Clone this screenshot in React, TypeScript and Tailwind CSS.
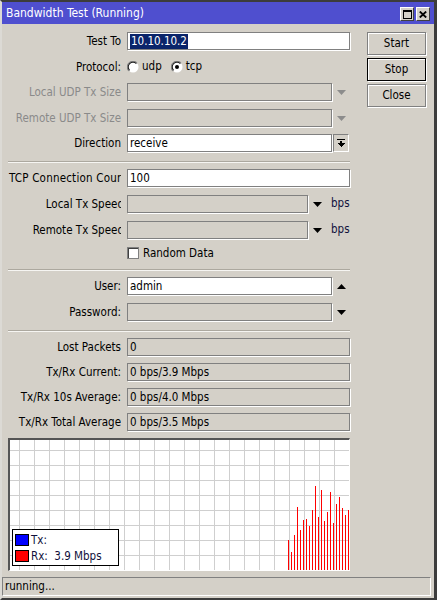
import React from "react";

const F = "font-['DejaVu_Sans_Condensed','DejaVu_Sans',sans-serif]";

function Label({
  text,
  disabled,
  clip,
  left,
}: {
  text: string;
  disabled?: boolean;
  clip?: boolean;
  left?: boolean;
}) {
  return (
    <div
      className={`w-[113px] shrink-0 overflow-hidden whitespace-nowrap flex ${
        left ? "justify-start pl-[1px] tracking-[0.2px]" : "justify-end"
      } text-[11.5px] leading-[18px] ${disabled ? "text-[#8a8a8a]" : "text-black"}`}
    >
      <span className={clip ? "mr-[-3px] shrink-0" : "shrink-0"}>{text}</span>
    </div>
  );
}

function Box({
  className,
  white,
  children,
}: {
  className: string;
  white?: boolean;
  children?: React.ReactNode;
}) {
  return (
    <div
      className={`h-[18px] shrink-0 ml-[6px] border border-[#808080] shadow-[1px_1px_0_#ffffff] ${
        white ? "bg-white" : "bg-[#d4d0c8]"
      } pl-[2px] text-[11.5px] leading-[16px] text-black whitespace-nowrap overflow-hidden ${className}`}
    >
      {children}
    </div>
  );
}

function Down({ gray }: { gray?: boolean }) {
  return (
    <svg width="9" height="5" viewBox="0 0 9 5" className="shrink-0">
      <polygon points="0,0 9,0 4.5,5" fill={gray ? "#8c8c8c" : "#000000"} />
    </svg>
  );
}

function Up() {
  return (
    <svg width="9" height="5" viewBox="0 0 9 5" className="shrink-0">
      <polygon points="0,5 9,5 4.5,0" fill="#000000" />
    </svg>
  );
}

function Sep({ mt }: { mt: string }) {
  return (
    <div
      className={`${mt} w-[342px] h-[2px] border-t border-t-[#aca89f] border-b border-b-[#f6f5f2]`}
    />
  );
}

function Radio({ checked }: { checked?: boolean }) {
  return (
    <svg width="12" height="12" viewBox="0 0 12 12" className="shrink-0">
      <circle cx="6" cy="6" r="5.5" fill="#ffffff" />
      <path d="M1.8 10.2 A5.5 5.5 0 0 1 10.2 1.8" fill="none" stroke="#808080" strokeWidth="1" />
      <path d="M2.6 9.4 A4.6 4.6 0 0 1 9.4 2.6" fill="none" stroke="#202020" strokeWidth="1.2" />
      {checked && <circle cx="6" cy="6" r="2" fill="#000000" />}
    </svg>
  );
}

const bars = [539, 551, 534, 506, 529, 519, 518, 525, 509, 485, 516, 489, 520, 511, 491, 522, 503, 496, 507, 514, 509];

function Chart() {
  const vx: number[] = [];
  for (let k = 0; k <= 21; k++) vx.push(9.5 + 15 * k);
  const hy: number[] = [];
  for (let k = 0; k <= 7; k++) hy.push(10.5 + 15 * k);
  return (
    <div className="mt-[7px] w-[342px] h-[133px] border-t-2 border-l-2 border-t-[#555555] border-l-[#555555] border-r border-b border-r-white border-b-white bg-white relative">
      <svg width="339" height="130" viewBox="0 0 339 130" className="block" shapeRendering="crispEdges">
        {vx.map((x) => (
          <line key={"v" + x} x1={x} y1={0} x2={x} y2={130} stroke="#cfcfcf" strokeWidth="1" />
        ))}
        {hy.map((y) => (
          <line key={"h" + y} x1={0} y1={y} x2={339} y2={y} stroke="#cfcfcf" strokeWidth="1" />
        ))}
        {bars.map((t, i) => (
          <rect key={i} x={278 + 3 * i} y={t - 439} width="1" height={569 - t} fill="#ff0000" />
        ))}
      </svg>
      <div className="absolute left-[2px] top-[89px] w-[107px] h-[37px] border border-black bg-white pl-[2px] pt-[4px] flex flex-col gap-[4px] text-[11.5px] leading-[12px] text-[#10103c]">
        <div className="flex items-center h-[12px]">
          <div className="w-[14px] h-[12px] bg-[#0000ff] border border-black" />
          <span className="ml-[2px]">Tx:</span>
        </div>
        <div className="flex items-center h-[12px]">
          <div className="w-[14px] h-[12px] bg-[#ff0000] border border-black" />
          <span className="ml-[2px] whitespace-pre">Rx:  3.9 Mbps</span>
        </div>
      </div>
    </div>
  );
}

function Btn({ text, def, mt }: { text: string; def?: boolean; mt?: string }) {
  return (
    <div
      className={`${mt ?? ""} w-[59px] h-[23px] flex items-center justify-center text-[11.5px] text-black ${
        def
          ? "border border-black shadow-[inset_1px_1px_0_#ffffff,1px_1px_0_#ffffff]"
          : "border border-[#808080] shadow-[inset_1px_1px_0_#ffffff,1px_1px_0_#ffffff]"
      }`}
    >
      {text}
    </div>
  );
}

export default function App() {
  return (
    <div
      className={`${F} w-[437px] h-[600px] flex flex-col bg-[#d4d0c8] border-t-2 border-t-[#3c3c3c] border-l-2 border-l-[#dcdad5] border-r-[3px] border-r-[#3c3c3c] border-b-2 border-b-[#3c3c3c] overflow-hidden`}
    >
      {/* title bar */}
      <div className="h-[22px] shrink-0 bg-[#4f4fcf] flex items-start pl-[4px] pr-[4px]">
        <div className="text-white text-[12px] leading-[22px] flex-1">Bandwidth Test (Running)</div>
        <div className="flex gap-[2px] mt-[5px]">
          <div className="w-[14px] h-[14px] bg-[#d4d0c8] border border-t-white border-l-white border-r-[#404040] border-b-[#404040] flex items-center justify-center">
            <svg width="9" height="9" viewBox="0 0 9 9" shapeRendering="crispEdges">
              <rect x="0.5" y="0.5" width="8" height="8" fill="none" stroke="#000" strokeWidth="1" />
              <rect x="0" y="0" width="9" height="2" fill="#000" />
            </svg>
          </div>
          <div className="w-[14px] h-[14px] bg-[#d4d0c8] border border-t-white border-l-white border-r-[#404040] border-b-[#404040] flex items-center justify-center">
            <svg width="8" height="7" viewBox="0 0 8 7">
              <path d="M0.8 0.5 L7.2 6.5 M7.2 0.5 L0.8 6.5" stroke="#000" strokeWidth="1.8" />
            </svg>
          </div>
        </div>
      </div>

      {/* body */}
      <div className="flex-1 flex pl-[6px] pt-[8px]">
        <div className="w-[343px] shrink-0 flex flex-col">
          <div className="flex items-center h-[18px]">
            <Label text="Test To" />
            <Box white className="w-[223px] pl-[2px]">
              <span className="bg-[#0a246a] text-white px-[1px] leading-[15px] inline-block">10.10.10.2</span>
            </Box>
          </div>
          <div className="flex items-center h-[18px] mt-[8px]">
            <Label text="Protocol:" />
            <div className="ml-[6px] flex items-center text-[11.5px]">
              <Radio />
              <span className="ml-[3px]">udp</span>
              <span className="ml-[9px]">
                <Radio checked />
              </span>
              <span className="ml-[3px]">tcp</span>
            </div>
          </div>
          <div className="flex items-center h-[18px] mt-[7px]">
            <Label text="Local UDP Tx Size" disabled />
            <Box className="w-[205px]" />
            <div className="ml-[5px]">
              <Down gray />
            </div>
          </div>
          <div className="flex items-center h-[18px] mt-[8px]">
            <Label text="Remote UDP Tx Size" disabled />
            <Box className="w-[205px]" />
            <div className="ml-[5px]">
              <Down gray />
            </div>
          </div>
          <div className="flex items-center h-[18px] mt-[7px]">
            <Label text="Direction" />
            <Box white className="w-[205px]">receive</Box>
            <div className="ml-[1px] w-[16px] h-[18px] border border-t-[#808080] border-l-[#808080] border-r-white border-b-white flex items-center justify-center">
              <svg width="8" height="9" viewBox="0 0 8 9" shapeRendering="crispEdges">
                <rect x="0" y="0" width="8" height="1" fill="#000" />
                <rect x="3" y="2" width="2" height="3" fill="#000" />
                <polygon points="0,4 8,4 4,8" fill="#000" />
              </svg>
            </div>
          </div>

          <Sep mt="mt-[9px]" />

          <div className="flex items-center h-[18px] mt-[6px]">
            <Label text="TCP Connection Count" left />
            <Box white className="w-[223px]">100</Box>
          </div>
          <div className="flex items-center h-[18px] mt-[8px]">
            <Label text="Local Tx Speed" clip />
            <Box className="w-[181px]" />
            <div className="ml-[5px]">
              <Down />
            </div>
            <span className="ml-[9px] text-[11.5px] text-[#10103c]">bps</span>
          </div>
          <div className="flex items-center h-[18px] mt-[8px]">
            <Label text="Remote Tx Speed" clip />
            <Box className="w-[181px]" />
            <div className="ml-[5px]">
              <Down />
            </div>
            <span className="ml-[9px] text-[11.5px] text-[#10103c]">bps</span>
          </div>
          <div className="flex items-center h-[12px] mt-[8px]">
            <div className="w-[113px] shrink-0" />
            <div className="ml-[6px] w-[12px] h-[12px] bg-white border border-[#808080] shadow-[inset_1px_1px_0_#404040]" />
            <span className="ml-[4px] text-[11.5px] leading-[12px]">Random Data</span>
          </div>

          <Sep mt="mt-[10px]" />

          <div className="flex items-center h-[18px] mt-[6px]">
            <Label text="User:" />
            <Box white className="w-[205px]">admin</Box>
            <div className="ml-[5px]">
              <Up />
            </div>
          </div>
          <div className="flex items-center h-[18px] mt-[8px]">
            <Label text="Password:" />
            <Box className="w-[205px]" />
            <div className="ml-[5px]">
              <Down />
            </div>
          </div>

          <Sep mt="mt-[9px]" />

          <div className="flex items-center h-[18px] mt-[6px]">
            <Label text="Lost Packets" />
            <Box className="w-[223px]">0</Box>
          </div>
          <div className="flex items-center h-[18px] mt-[7px]">
            <Label text="Tx/Rx Current:" />
            <Box className="w-[223px]">0 bps/3.9 Mbps</Box>
          </div>
          <div className="flex items-center h-[18px] mt-[7px]">
            <Label text="Tx/Rx 10s Average:" />
            <Box className="w-[223px]">0 bps/4.0 Mbps</Box>
          </div>
          <div className="flex items-center h-[18px] mt-[7px]">
            <Label text="Tx/Rx Total Average" />
            <Box className="w-[223px]">0 bps/3.5 Mbps</Box>
          </div>

          <Chart />
        </div>

        <div className="ml-[16px] flex flex-col">
          <Btn text="Start" />
          <Btn text="Stop" def mt="mt-[3px]" />
          <Btn text="Close" mt="mt-[3px]" />
        </div>
      </div>

      {/* status bar */}
      <div className="shrink-0 h-[19px] mr-[3px] mb-[2px] border-t border-l border-t-[#808080] border-l-[#808080] border-b border-r border-b-white border-r-white pl-[2px] text-[11.5px] leading-[17px] text-black">
        running...
      </div>
    </div>
  );
}
